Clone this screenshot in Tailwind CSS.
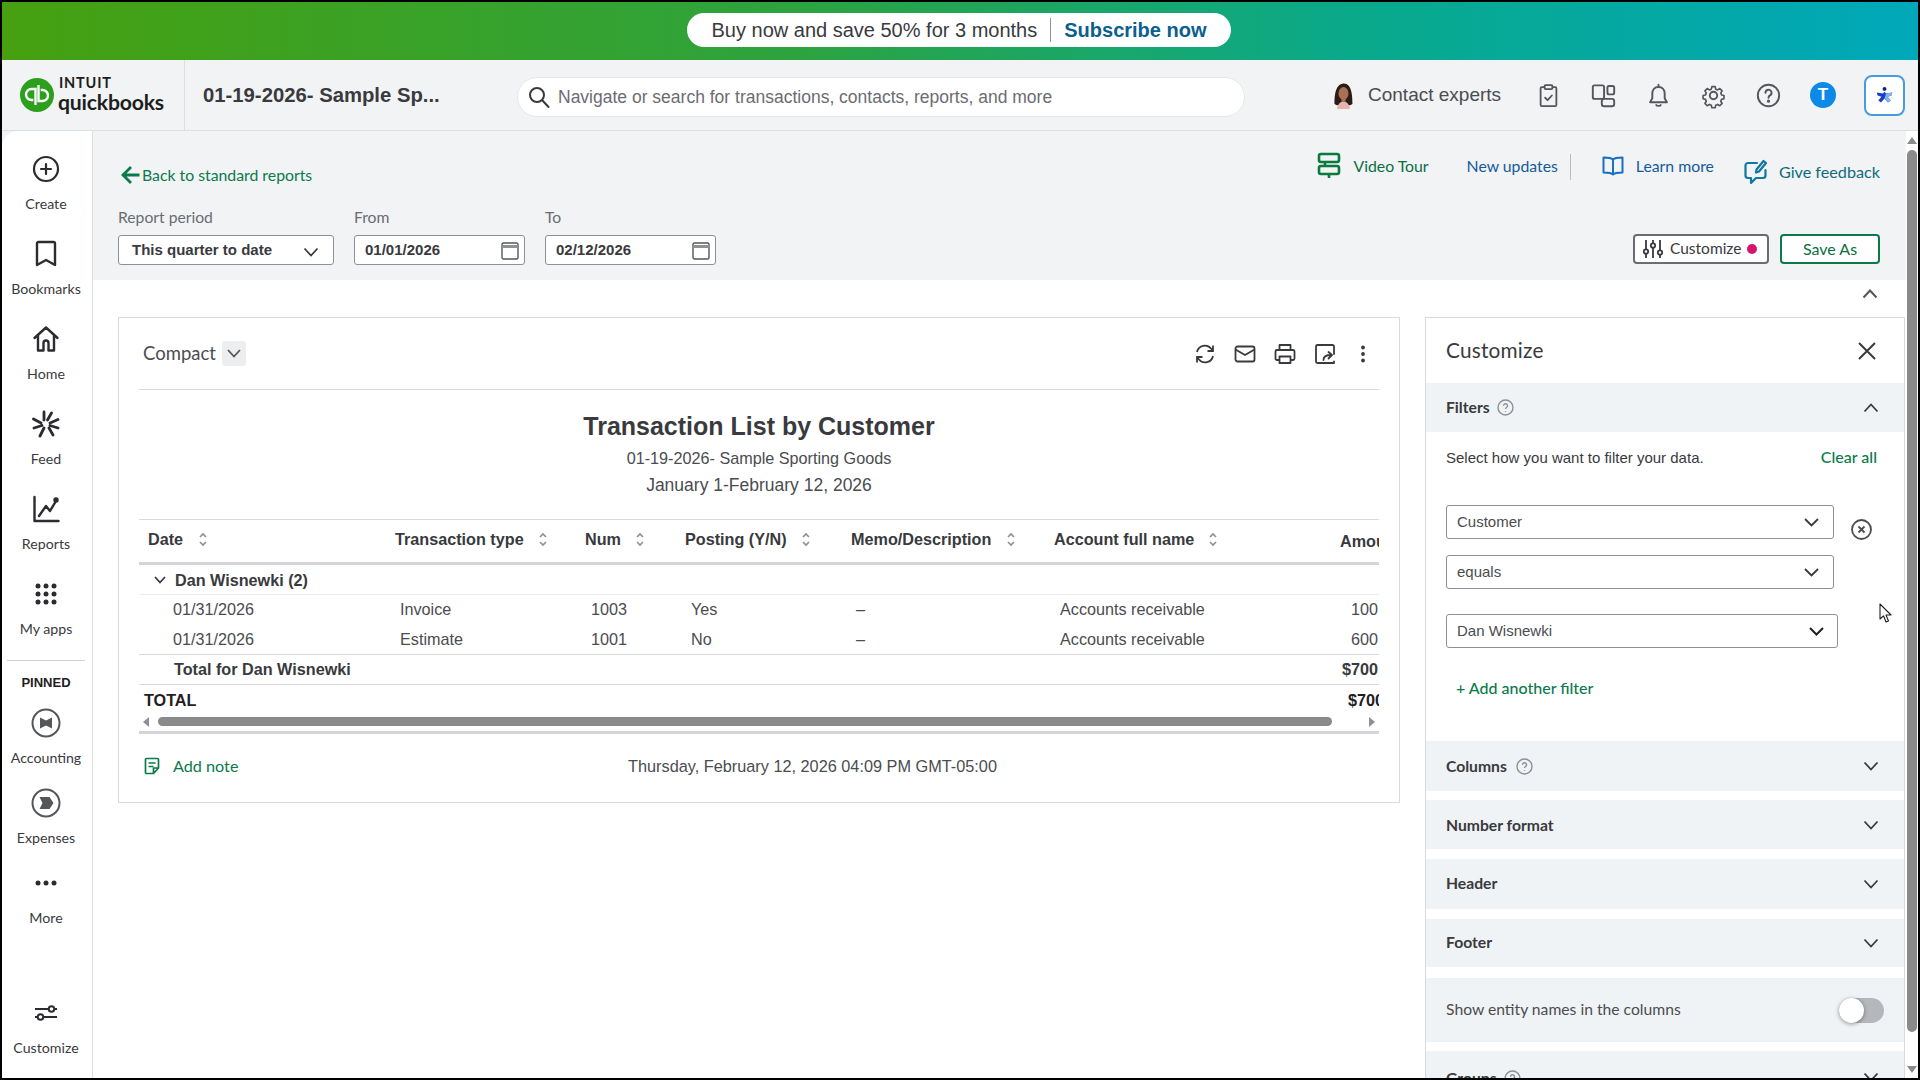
<!DOCTYPE html>
<html lang="en">
<head>
<meta charset="utf-8">
<title>Transaction List by Customer</title>
<script src="https://cdn.jsdelivr.net/npm/@tailwindcss/browser@4"></script>
</head>
<body class="bg-black overflow-hidden">
<div class="w-[1920px] h-[1080px] bg-black pl-[2px] pr-[2px] pt-[2px] pb-[2px] overflow-hidden font-['Liberation_Sans',sans-serif]">
<div class="relative w-[1916px] h-[1076px] flex flex-col overflow-hidden bg-[#f1f3f5]">

  <!-- promo banner -->
  <div class="h-[58px] shrink-0 flex items-start justify-center pt-[11px] pr-[2px] bg-[linear-gradient(90deg,#46a010_0%,#2ea33c_40%,#0aa98a_70%,#00a8ba_100%)]">
    <div class="h-[34px] w-[544px] rounded-full bg-white flex items-center justify-center text-[20px] text-[#393a3d]">
      <span>Buy now and save 50% for 3 months</span>
      <span class="w-px h-[24px] bg-[#8d9096] mx-[13px]"></span>
      <span class="font-bold text-[#0b5f8f] text-[20px]">Subscribe now</span>
    </div>
  </div>

  <!-- header -->
  <div class="h-[71px] shrink-0 flex items-stretch border-b border-[#dcdfe2]">
    <div class="w-[183px] shrink-0 border-r border-[#dcdfe2] flex items-center pl-[18px] gap-[4px]">
      <svg width="34" height="34" viewBox="0 0 34 34"><circle cx="17" cy="17" r="17" fill="#2ca01c"/><path d="M15.500 27V11h-4a5.500 5.500 0 0 0 0 11h1.800M18.500 7v16h4a5.500 5.500 0 0 0 0-11h-1.800" fill="none" stroke="#fff" stroke-width="2.400"/></svg>
      <div class="flex flex-col text-[#1d1e20] font-['Lato',sans-serif]">
        <span class="text-[14.500px] font-bold tracking-[0.8px] h-[14px] leading-[14px] ml-[1px]">INTUIT</span>
        <span class="text-[21.200px] font-bold h-[24px] leading-[24px] tracking-[-0.2px]">quickbooks</span>
      </div>
    </div>
    <div class="w-[332px] shrink-0 flex items-center pl-[18px] font-bold text-[20.300px] text-[#393a3d]">01-19-2026- Sample Sp...</div>
    <div class="w-[728px] h-[40px] mt-[17px] rounded-full bg-white border border-[#e5e7ea] flex items-center pl-[9px] gap-[7px] text-[17.500px] text-[#6b6c72]">
      <svg width="24" height="24" viewBox="0 0 24 24" fill="none" stroke="#393a3d" stroke-width="2" stroke-linecap="round"><circle cx="10" cy="10" r="7"/><path d="M15.500 15.500l6 6.500"/></svg>
      <span>Navigate or search for transactions, contacts, reports, and more</span>
    </div>
    <div class="flex items-center ml-[85px]">
      <svg width="27" height="29" viewBox="0 0 27 29" class="shrink-0"><circle cx="13.500" cy="14.500" r="13.500" fill="#f6f4f3"/><path d="M4.500 23c0-9 1-20 9-20.500S22.500 14 22.500 23c-2 1.500-4 1.500-5 1H9.500c-1 .5-3 .5-5-1z" fill="#2a1c19"/><ellipse cx="13.500" cy="12.500" rx="5" ry="6.500" fill="#a87152"/><path d="M11.500 17h4v4h-4z" fill="#a87152"/><path d="M7 28c.5-4 3-7 4.500-7h4c1.500 0 4 3 4.500 7z" fill="#e8b4ac"/></svg>
      <span class="ml-[11px] text-[19px] text-[#4b4c50] w-[167px]">Contact experts</span>
      <div class="flex items-center gap-[28px]">
        <svg width="27" height="27" viewBox="0 0 24 24" fill="none" stroke="#55565a" stroke-width="1.600" stroke-linejoin="round" stroke-linecap="round"><path d="M8.500 4.500H6a1 1 0 0 0-1 1v15a1 1 0 0 0 1 1h12a1 1 0 0 0 1-1v-15a1 1 0 0 0-1-1h-2.500"/><rect x="8.500" y="2.800" width="7" height="3.500" rx="1"/><path d="M9 14l2.200 2.200L15 12"/></svg>
        <svg width="27" height="27" viewBox="0 0 24 24" fill="none" stroke="#55565a" stroke-width="1.700" stroke-linejoin="round"><rect x="2.500" y="3" width="10" height="12" rx="1.500"/><rect x="15.500" y="3.500" width="6" height="7.500" rx="1.500"/><rect x="10.500" y="15" width="11" height="6.500" rx="2"/></svg>
        <svg width="27" height="27" viewBox="0 0 24 24" fill="none" stroke="#55565a" stroke-width="1.700" stroke-linejoin="round" stroke-linecap="round"><path d="M12 4.500c-3.500 0-5.500 2.500-5.500 6v4l-2 3.500h15l-2-3.500v-4c0-3.500-2-6-5.500-6zM12 2.500v2M10 20.500c.5 1 3.500 1 4 0"/></svg>
        <svg width="27" height="27" viewBox="0 0 24 24" fill="none" stroke="#55565a" stroke-width="1.700" stroke-linejoin="round"><path d="M10.300 2.800h3.400l.6 2.600 1.900.8 2.300-1.400 2.400 2.400-1.400 2.300.8 1.900 2.500.6v3.400l-2.500.6-.8 1.900 1.400 2.300-2.400 2.400-2.300-1.400-1.900.8-.6 2.600h-3.400l-.6-2.600-1.900-.8-2.300 1.400-2.400-2.400 1.400-2.300-.8-1.900-2.500-.6v-3.400l2.500-.6.8-1.900-1.400-2.300 2.400-2.400 2.300 1.400 1.900-.8z" transform="translate(1.700 1.700) scale(.86)"/><circle cx="12" cy="12" r="3.300"/></svg>
        <svg width="27" height="27" viewBox="0 0 24 24" fill="none" stroke="#55565a" stroke-width="1.700" stroke-linecap="round"><circle cx="12" cy="12" r="9.500"/><path d="M9.300 9.500a2.700 2.700 0 1 1 4 2.400c-.9.500-1.300 1-1.300 2.100"/><circle cx="12" cy="17" r=".6" fill="#55565a"/></svg>
      </div>
      <div class="ml-[28px] w-[26px] h-[26px] rounded-full bg-[#0d8ae8] text-white font-bold text-[17px] flex items-center justify-center">T</div>
      <div class="ml-[28px] w-[41px] h-[41px] rounded-[8px] bg-white border-[2px] border-[#4a9ade] flex items-center justify-center">
        <svg width="17" height="21" viewBox="0 0 22 24"><circle cx="11" cy="3.500" r="2.500" fill="#0b1f8a"/><path d="M1 8l8 1.500L11 7l2 2.500 8-1.500-1 4-5 1.500 4 5-3.500 2.500-4.500-5-4.500 5L3 18.500l4-5L2 12z" fill="#1a3fc8"/><path d="M13 9.500l8-1.500-1 4-5 1.500 4 5-3.500 2.500-4.500-5z" fill="#7fb2ee"/></svg>
      </div>
    </div>
  </div>

  <!-- body -->
  <div class="flex-1 flex min-h-0">
    <!-- sidebar -->
    <nav class="w-[91px] shrink-0 bg-white rounded-tl-[16px] border-r border-[#dcdfe2] flex flex-col items-center pt-[20px] pr-[2px] text-[14.200px] text-[#393a3d] font-['Lato',sans-serif]">
      <a class="h-[85px] w-full flex flex-col items-center">
        <span class="h-[36px] flex items-center"><svg width="28" height="28" viewBox="0 0 28 28" fill="none" stroke="#2b2c2f" stroke-width="2.200" stroke-linecap="round"><circle cx="14" cy="14" r="12"/><path d="M14 9v10M9 14h10"/></svg></span>
        <span class="mt-[7px] leading-[20px]">Create</span>
      </a>
      <a class="h-[85px] w-full flex flex-col items-center">
        <span class="h-[36px] flex items-center"><svg width="24" height="28" viewBox="0 0 24 28" fill="none" stroke="#2b2c2f" stroke-width="2.400" stroke-linejoin="round"><path d="M3 3.500a1.500 1.500 0 0 1 1.500-1.500h15A1.500 1.500 0 0 1 21 3.500V25l-9-5-9 5z"/></svg></span>
        <span class="mt-[7px] leading-[20px]">Bookmarks</span>
      </a>
      <a class="h-[85px] w-full flex flex-col items-center">
        <span class="h-[36px] flex items-center"><svg width="28" height="28" viewBox="0 0 28 28" fill="none" stroke="#2b2c2f" stroke-width="2.400" stroke-linejoin="round" stroke-linecap="round"><path d="M2.500 13L14 2.500 25.500 13M6 10v15.500h5.500V18a2.500 2.500 0 0 1 5 0v7.500H22V10"/></svg></span>
        <span class="mt-[7px] leading-[20px]">Home</span>
      </a>
      <a class="h-[85px] w-full flex flex-col items-center">
        <span class="h-[36px] flex items-center"><svg width="28" height="28" viewBox="0 0 28 28" fill="none" stroke="#2b2c2f" stroke-width="2.800" stroke-linecap="round"><path d="M12 2v8M19.500 3l-4 7M26 9.500l-8 3.500M1.500 9l7.500 4M2 18l8-2.500M8 26l4-8M17 18l4 7M18 15.500l8 2.500"/></svg></span>
        <span class="mt-[7px] leading-[20px]">Feed</span>
      </a>
      <a class="h-[85px] w-full flex flex-col items-center">
        <span class="h-[36px] flex items-center"><svg width="28" height="28" viewBox="0 0 28 28" fill="none" stroke="#2b2c2f" stroke-width="2.400" stroke-linejoin="round" stroke-linecap="round"><path d="M2.500 2v24h24"/><path d="M7 21l7-10 4 5 6-10"/><circle cx="24" cy="5" r="1.500" fill="#2b2c2f"/></svg></span>
        <span class="mt-[7px] leading-[20px]">Reports</span>
      </a>
      <a class="h-[85px] w-full flex flex-col items-center">
        <span class="h-[36px] flex items-center"><svg width="22" height="22" viewBox="0 0 22 22" fill="#2b2c2f"><circle cx="3" cy="3" r="2.500"/><circle cx="11" cy="3" r="2.500"/><circle cx="19" cy="3" r="2.500"/><circle cx="3" cy="11" r="2.500"/><circle cx="11" cy="11" r="2.500"/><circle cx="19" cy="11" r="2.500"/><circle cx="3" cy="19" r="2.500"/><circle cx="11" cy="19" r="2.500"/><circle cx="19" cy="19" r="2.500"/></svg></span>
        <span class="mt-[7px] leading-[20px]">My apps</span>
      </a>
      <div class="w-[78px] h-px bg-[#cfd1d4] mt-[-1px]"></div>
      <div class="mt-[12px] font-['Liberation_Sans',sans-serif] font-bold text-[13px] leading-[20px] text-[#1f2022]">PINNED</div>
      <a class="h-[80px] w-full flex flex-col items-center mt-[12px]">
        <span class="h-[36px] flex items-center"><svg width="30" height="30" viewBox="0 0 30 30"><circle cx="15" cy="15" r="13.500" fill="none" stroke="#55565a" stroke-width="2"/><path d="M9 9.500l6 3 6-3v11l-6-3-6 3z" fill="#55565a"/></svg></span>
        <span class="mt-[7px] leading-[20px]">Accounting</span>
      </a>
      <a class="h-[80px] w-full flex flex-col items-center">
        <span class="h-[36px] flex items-center"><svg width="30" height="30" viewBox="0 0 30 30"><circle cx="15" cy="15" r="13.500" fill="none" stroke="#55565a" stroke-width="2"/><path d="M8.500 9h10l4 6-4 6h-10l3-6z" fill="#55565a"/></svg></span>
        <span class="mt-[7px] leading-[20px]">Expenses</span>
      </a>
      <a class="h-[95px] w-full flex flex-col items-center">
        <span class="h-[36px] flex items-center"><svg width="22" height="6" viewBox="0 0 22 6" fill="#2b2c2f"><circle cx="3" cy="3" r="2.500"/><circle cx="11" cy="3" r="2.500"/><circle cx="19" cy="3" r="2.500"/></svg></span>
        <span class="mt-[7px] leading-[20px]">More</span>
      </a>
      <a class="h-[65px] w-full flex flex-col items-center mt-[35px]">
        <span class="h-[36px] flex items-center"><svg width="24" height="20" viewBox="0 0 24 20" fill="none" stroke="#2b2c2f" stroke-width="2"><path d="M1 6h14M20 6h3M1 14h3M9 14h14"/><circle cx="17.500" cy="6" r="2.800"/><circle cx="6.500" cy="14" r="2.800"/></svg></span>
        <span class="mt-[7px] leading-[20px]">Customize</span>
      </a>
    </nav>

    <!-- content -->
    <main class="flex-1 min-w-0 flex flex-col bg-white">
      <!-- toolbar -->
      <div class="h-[149px] shrink-0 bg-[#f1f3f5] pl-[25px] pr-[26px] flex flex-col">
        <div class="h-[76px] shrink-0 flex justify-between items-start">
          <a class="flex items-center mt-[32px] ml-[2px] text-[#0b7a4b] text-[15.800px] font-['Lato',sans-serif] leading-[24px]">
            <svg width="19" height="20" viewBox="0 0 19 20" fill="none" stroke="#0b7a4b" stroke-width="2.800" class="ml-[1px]"><path d="M18.500 10H3M10 2l-8 8 8 8"/></svg>
            <span class="ml-[2px]">Back to standard reports</span>
          </a>
          <div class="flex items-start font-['Lato',sans-serif] text-[15.800px] leading-[24px]">
            <a class="flex items-center mt-[21px] text-[#0b6e42]">
              <svg width="24" height="28" viewBox="0 0 24 28" fill="none" stroke="#0b7a3e" stroke-width="2.600" stroke-linejoin="round"><rect x="2" y="2" width="20" height="8" rx="2"/><rect x="2" y="14" width="20" height="8" rx="2"/><path d="M8 10v4M12 22v4"/></svg>
              <span class="ml-[12px]">Video Tour</span>
            </a>
            <a class="ml-[38px] mt-[23px] text-[#155a9c]">New updates</a>
            <span class="ml-[12px] mt-[23px] w-px h-[26px] bg-[#b9bcc0]"></span>
            <a class="flex items-center ml-[31px] mt-[23px] text-[#155a9c]">
              <svg width="22" height="22" viewBox="0 0 22 22" fill="none" stroke="#1b6fc0" stroke-width="2" stroke-linejoin="round"><path d="M11 4.500C9 2.500 5 2.500 1.500 2.500v15c3.500 0 7.500 0 9.500 2 2-2 6-2 9.500-2v-15c-3.500 0-7.500 0-9.500 2zM11 4.500v15"/></svg>
              <span class="ml-[12px]">Learn more</span>
            </a>
            <a class="flex items-center ml-[30px] mt-[28px] text-[#0f6b7c] text-[16.200px]">
              <svg width="24" height="26" viewBox="0 0 24 26" fill="none" stroke="#0f78a0" stroke-width="2.200" stroke-linejoin="round" stroke-linecap="round"><path d="M13 4H4a2.500 2.500 0 0 0-2.500 2.500v10A2.500 2.500 0 0 0 4 19h3v5l5-5h7a2.500 2.500 0 0 0 2.500-2.500V11"/><path d="M19.500 2l2.500 2-7 8.500-3 1 .5-3z"/></svg>
              <span class="ml-[11px]">Give feedback</span>
            </a>
          </div>
        </div>
        <div class="flex justify-between items-end">
          <div class="flex items-end gap-[20px] font-['Lato',sans-serif]">
            <label class="flex flex-col">
              <span class="text-[15.700px] leading-[20px] text-[#6b6c72] mb-[8px]">Report period</span>
              <span class="h-[30px] w-[216px] bg-white border border-[#8d9096] rounded-[3px] flex items-center justify-between pl-[13px] pr-[14px] text-[15px] font-bold text-[#393a3d] font-['Liberation_Sans',sans-serif]">This quarter to date
                <svg width="16" height="10" viewBox="0 0 16 10" fill="none" stroke="#393a3d" stroke-width="1.800" class="mt-[3px]"><path d="M1.500 1.500L8 8.500l6.500-7"/></svg>
              </span>
            </label>
            <label class="flex flex-col">
              <span class="text-[15.700px] leading-[20px] text-[#6b6c72] mb-[8px]">From</span>
              <span class="h-[30px] w-[171px] bg-white border border-[#8d9096] rounded-[3px] flex items-center justify-between pl-[10px] pr-[5px] text-[15px] font-bold text-[#393a3d] font-['Liberation_Sans',sans-serif]">01/01/2026
                <svg width="18" height="19" viewBox="0 0 18 19" fill="none" stroke="#55565a" stroke-width="1.400"><rect x="1" y="2" width="16" height="16" rx="1.500"/><path d="M1 5.500h16" stroke-width="3" stroke="#8d9096"/></svg>
              </span>
            </label>
            <label class="flex flex-col">
              <span class="text-[15.700px] leading-[20px] text-[#6b6c72] mb-[8px]">To</span>
              <span class="h-[30px] w-[171px] bg-white border border-[#8d9096] rounded-[3px] flex items-center justify-between pl-[10px] pr-[5px] text-[15px] font-bold text-[#393a3d] font-['Liberation_Sans',sans-serif]">02/12/2026
                <svg width="18" height="19" viewBox="0 0 18 19" fill="none" stroke="#55565a" stroke-width="1.400"><rect x="1" y="2" width="16" height="16" rx="1.500"/><path d="M1 5.500h16" stroke-width="3" stroke="#8d9096"/></svg>
              </span>
            </label>
          </div>
          <div class="flex items-center gap-[11px] mb-[1px] font-['Lato',sans-serif] text-[15.500px]">
            <a class="w-[136px] h-[30px] bg-white border-[2px] border-[#6b6c72] rounded-[4px] flex items-center pl-[7px] text-[#393a3d]">
              <svg width="22" height="20" viewBox="0 0 22 20" fill="none" stroke="#393a3d" stroke-width="1.800"><path d="M4 1v9M4 15v4M11 1v3M11 9v10M18 1v10M18 16v3"/><circle cx="4" cy="12.500" r="2.200"/><circle cx="11" cy="6.500" r="2.200"/><circle cx="18" cy="13.500" r="2.200"/></svg>
              <span class="ml-[6px]">Customize</span>
              <span class="ml-[6px] w-[10px] h-[10px] rounded-full bg-[#d6146e]"></span>
            </a>
            <a class="w-[100px] h-[30px] bg-white border-[2px] border-[#0b7a4b] rounded-[4px] flex items-center justify-center text-[#0b6e42] text-[16px]">Save As</a>
          </div>
        </div>
      </div>

      <!-- collapse chevron -->
      <div class="h-[37px] shrink-0 flex justify-end pr-[28px] pb-[10px] items-center">
        <svg width="16" height="10" viewBox="0 0 16 10" fill="none" stroke="#55565a" stroke-width="2"><path d="M1.500 8.500L8 1.500l6.500 7"/></svg>
      </div>

      <div class="flex-1 min-h-0 flex items-start pl-[25px] gap-[25px]">
        <!-- report card -->
        <section class="w-[1282px] h-[486px] border border-[#d9dadc] shrink-0 px-[20px] flex flex-col text-[#393a3d]">
          <div class="h-[72px] shrink-0 flex items-center justify-between border-b border-[#d9dadc] pl-[4px] pr-[5px]">
            <div class="flex items-center font-['Lato',sans-serif] text-[18.500px] text-[#4b4c50]">
              Compact
              <span class="ml-[6px] w-[24px] h-[25px] rounded-[3px] bg-[#eceef0] flex items-center justify-center"><svg width="14" height="9" viewBox="0 0 14 9" fill="none" stroke="#55565a" stroke-width="1.800"><path d="M1 1l6 6.500L13 1"/></svg></span>
            </div>
            <div class="flex items-center gap-[18px]">
              <svg width="22" height="22" viewBox="0 0 22 22" fill="none" stroke="#393a3d" stroke-width="1.800"><path d="M3 9a8 8 0 0 1 14-3.500l2 2.500M19 2.500V8h-5.500M19 13a8 8 0 0 1-14 3.500L3 14M3 19.500V14h5.500"/></svg>
              <svg width="22" height="22" viewBox="0 0 22 22" fill="none" stroke="#393a3d" stroke-width="1.800" stroke-linejoin="round"><rect x="1.500" y="3.500" width="19" height="15" rx="2"/><path d="M1.500 6.500L11 12l9.500-5.500"/></svg>
              <svg width="22" height="22" viewBox="0 0 22 22" fill="none" stroke="#393a3d" stroke-width="1.800" stroke-linejoin="round"><path d="M5.500 7V2h11v5M5 17H3a1.500 1.500 0 0 1-1.500-1.500v-7A1.500 1.500 0 0 1 3 7h16a1.500 1.500 0 0 1 1.500 1.500v7A1.500 1.500 0 0 1 19 17h-2"/><path d="M5.500 13.500h11V20h-11z"/></svg>
              <svg width="22" height="22" viewBox="0 0 22 22" fill="none" stroke="#393a3d" stroke-width="1.800" stroke-linejoin="round" stroke-linecap="round"><path d="M20 11V3.500A1.500 1.500 0 0 0 18.500 2h-15A1.500 1.500 0 0 0 2 3.500v15A1.500 1.500 0 0 0 3.500 20H20v-1.500"/><path d="M9.500 17c0-3.500 3-5 7.500-5M14.500 9l3.500 3-3.500 3.500"/></svg>
              <svg width="22" height="22" viewBox="0 0 22 22" fill="#393a3d" class="ml-[-2px]"><circle cx="11" cy="4.500" r="1.900"/><circle cx="11" cy="11" r="1.900"/><circle cx="11" cy="17.500" r="1.900"/></svg>
            </div>
          </div>
          <div class="h-[129px] shrink-0 flex flex-col items-center text-center">
            <h1 class="mt-[20px] leading-[32px] font-bold text-[25px] text-[#393a3d]">Transaction List by Customer</h1>
            <p class="leading-[24px] mt-[4px] text-[16.200px] text-[#4b4c50]">01-19-2026- Sample Sporting Goods</p>
            <p class="leading-[24px] mt-[3px] text-[17.500px] text-[#4b4c50]">January 1-February 12, 2026</p>
          </div>
          <!-- table -->
          <div class="overflow-hidden flex flex-col">
            <div class="grid grid-cols-[252px_190px_100px_166px_203px_281px_100px] h-[46px] items-center border-t border-[#d9dadc] border-b-[3px] border-b-[#d4d5d8] font-bold text-[16.200px] text-[#393a3d] shrink-0 pb-[3px]">
              <span class="pl-[9px] flex items-center gap-[15px]">Date <svg width="10" height="15" viewBox="0 0 10 15" fill="none" stroke="#8d9096" stroke-width="1.700"><path d="M2 5l3-3 3 3M2 10l3 3 3-3"/></svg></span>
              <span class="pl-[4px] flex items-center gap-[14px]">Transaction type <svg width="10" height="15" viewBox="0 0 10 15" fill="none" stroke="#8d9096" stroke-width="1.700"><path d="M2 5l3-3 3 3M2 10l3 3 3-3"/></svg></span>
              <span class="pl-[4px] flex items-center gap-[14px]">Num <svg width="10" height="15" viewBox="0 0 10 15" fill="none" stroke="#8d9096" stroke-width="1.700"><path d="M2 5l3-3 3 3M2 10l3 3 3-3"/></svg></span>
              <span class="pl-[4px] flex items-center gap-[14px]">Posting (Y/N) <svg width="10" height="15" viewBox="0 0 10 15" fill="none" stroke="#8d9096" stroke-width="1.700"><path d="M2 5l3-3 3 3M2 10l3 3 3-3"/></svg></span>
              <span class="pl-[4px] flex items-center gap-[15px]">Memo/Description <svg width="10" height="15" viewBox="0 0 10 15" fill="none" stroke="#8d9096" stroke-width="1.700"><path d="M2 5l3-3 3 3M2 10l3 3 3-3"/></svg></span>
              <span class="pl-[4px] flex items-center gap-[14px]">Account full name <svg width="10" height="15" viewBox="0 0 10 15" fill="none" stroke="#8d9096" stroke-width="1.700"><path d="M2 5l3-3 3 3M2 10l3 3 3-3"/></svg></span>
              <span class="pl-[9px] pt-[4px]">Amount</span>
            </div>
            <div class="h-[30px] flex items-center border-b border-[#ecedef] font-bold text-[16.200px] pl-[15px] gap-[9px] shrink-0 pt-[1px]">
              <svg width="12" height="8" viewBox="0 0 12 8" fill="none" stroke="#393a3d" stroke-width="1.800"><path d="M1 1l5 5.500L11 1"/></svg>
              <span>Dan Wisnewki (2)</span>
            </div>
            <div class="grid grid-cols-[252px_190px_100px_166px_203px_281px_100px] h-[30px] items-center text-[16.200px] text-[#4b4c50] shrink-0 pb-[1px]">
              <span class="pl-[34px]">01/31/2026</span><span class="pl-[9px]">Invoice</span><span class="pl-[10px]">1003</span><span class="pl-[10px]">Yes</span><span class="pl-[9px]">–</span><span class="pl-[10px]">Accounts receivable</span><span class="text-right pr-[53px]">100</span>
            </div>
            <div class="grid grid-cols-[252px_190px_100px_166px_203px_281px_100px] h-[30px] items-center text-[16.200px] text-[#4b4c50] border-b border-[#d9dadc] shrink-0">
              <span class="pl-[34px]">01/31/2026</span><span class="pl-[9px]">Estimate</span><span class="pl-[10px]">1001</span><span class="pl-[10px]">No</span><span class="pl-[9px]">–</span><span class="pl-[10px]">Accounts receivable</span><span class="text-right pr-[53px]">600</span>
            </div>
            <div class="h-[30px] flex items-center justify-between border-b border-[#d9dadc] font-bold text-[16.200px] pl-[35px] pr-[1px] shrink-0">
              <span>Total for Dan Wisnewki</span><span>$700</span>
            </div>
            <div class="h-[30px] flex items-center justify-between font-bold text-[16.200px] text-[#1f2022] pl-[5px] shrink-0">
              <span>TOTAL</span><span class="mr-[-5px]">$700</span>
            </div>
          </div>
          <!-- table scrollbar -->
          <div class="h-[19px] flex items-center border-b-[3px] border-[#d4d5d8] shrink-0 pb-[3px]">
            <span class="ml-[4px] w-0 h-0 border-y-[5px] border-y-transparent border-r-[6px] border-r-[#8d9096]"></span>
            <span class="ml-[9px] w-[1174px] h-[9px] rounded-full bg-[#8a8a8a]"></span>
            <span class="ml-[37px] w-0 h-0 border-y-[5px] border-y-transparent border-l-[6px] border-l-[#8d9096]"></span>
          </div>
          <div class="flex-1 relative flex items-center justify-center pb-[4px]">
            <a class="absolute left-[5px] top-1/2 -translate-y-[14px] flex items-center text-[#0b7a4b] font-['Lato',sans-serif] text-[16.200px]">
              <svg width="16" height="18" viewBox="0 0 16 18" fill="none" stroke="#0b7a4b" stroke-width="1.700" stroke-linejoin="round"><path d="M9.500 16.500H2.500a1 1 0 0 1-1-1v-13a1 1 0 0 1 1-1h11a1 1 0 0 1 1 1V11zM14.500 11H9.500v5.500M4.500 6h7M4.500 9.500h5"/></svg>
              <span class="ml-[13px]">Add note</span>
            </a>
            <span class="text-[16.300px] text-[#4b4c50] ml-[107px]">Thursday, February 12, 2026 04:09 PM GMT-05:00</span>
          </div>
        </section>

        <!-- customize panel -->
        <aside class="relative w-[480px] h-[800px] border border-[#d9dadc] border-b-0 shrink-0 flex flex-col text-[#393a3d]">
          <div class="h-[65px] shrink-0 flex items-center justify-between pl-[20px] pr-[27px] font-['Lato',sans-serif] text-[20.800px] text-[#393a3d]">
            <span class="mb-[2px] tracking-[0.2px]">Customize</span>
            <svg width="20" height="20" viewBox="0 0 20 20" fill="none" stroke="#393a3d" stroke-width="2"><path d="M2 2l16 16M18 2L2 18"/></svg>
          </div>
          <div class="h-[49px] shrink-0 bg-[#f0f3f5] flex items-center justify-between pl-[20px] pr-[25px] font-['Lato',sans-serif] font-bold text-[15.700px]">
            <span class="flex items-center gap-[7px]">Filters <svg width="17" height="17" viewBox="0 0 17 17" fill="none" stroke="#8d9096" stroke-width="1.400"><circle cx="8.500" cy="8.500" r="7.500"/><path d="M6.500 6.800a2 2 0 1 1 3 1.700c-.7.400-1 .8-1 1.500M8.500 12.300v.6"/></svg></span>
            <svg width="16" height="10" viewBox="0 0 16 10" fill="none" stroke="#393a3d" stroke-width="1.800"><path d="M1.500 8.500L8 1.500l6.500 7"/></svg>
          </div>
          <div class="h-[309px] shrink-0 pl-[20px] pr-[26px] flex flex-col">
            <div class="flex justify-between h-[52px] items-center shrink-0">
              <span class="text-[15px] text-[#393a3d] leading-[20px]">Select how you want to filter your data.</span>
              <a class="font-['Lato',sans-serif] text-[16px] text-[#0b7a4b] font-medium mb-[2px] mr-[1px]">Clear all</a>
            </div>
            <div class="relative mt-[21px] w-[388px] h-[34px] border border-[#8d9096] rounded-[3px] flex items-center justify-between pl-[10px] pr-[14px] text-[15px] text-[#4b4c50]"><span class="mt-[1px]">Customer</span>
              <svg width="15" height="9" viewBox="0 0 15 9" fill="none" stroke="#393a3d" stroke-width="1.800"><path d="M1 1l6.500 6.500L14 1"/></svg>
              <svg width="21" height="21" viewBox="0 0 21 21" fill="none" stroke="#4b4c50" stroke-width="1.800" class="absolute left-[404px] top-[13px]"><circle cx="10.500" cy="10.500" r="9.500"/><path d="M7.500 7.500l6 6M13.500 7.500l-6 6"/></svg>
            </div>
            <div class="mt-[16px] w-[388px] h-[34px] border border-[#8d9096] rounded-[3px] flex items-center justify-between pl-[10px] pr-[14px] text-[15px] text-[#4b4c50]">equals
              <svg width="15" height="9" viewBox="0 0 15 9" fill="none" stroke="#393a3d" stroke-width="1.800"><path d="M1 1l6.500 6.500L14 1"/></svg>
            </div>
            <div class="mt-[25px] w-[392px] h-[34px] border border-[#8d9096] rounded-[3px] flex items-center justify-between pl-[10px] pr-[13px] text-[15px] text-[#4b4c50]"><span class="mt-[1px]">Dan Wisnewki</span>
              <svg width="15" height="9" viewBox="0 0 15 9" fill="none" stroke="#1f2022" stroke-width="2"><path d="M1 1l6.500 6.500L14 1"/></svg>
            </div>
            <a class="mt-[30px] ml-[10px] font-['Lato',sans-serif] font-medium text-[16px] text-[#0b7a4b] leading-[20px]">+ Add another filter</a>
          </div>
          <div class="h-[50px] shrink-0 bg-[#f0f3f5] flex items-center justify-between pl-[20px] pr-[25px] font-['Lato',sans-serif] font-bold text-[15.700px]">
            <span class="flex items-center gap-[9px] mt-[1px]">Columns <svg width="17" height="17" viewBox="0 0 17 17" fill="none" stroke="#8d9096" stroke-width="1.400"><circle cx="8.500" cy="8.500" r="7.500"/><path d="M6.500 6.800a2 2 0 1 1 3 1.700c-.7.400-1 .8-1 1.500M8.500 12.300v.6"/></svg></span>
            <svg width="16" height="10" viewBox="0 0 16 10" fill="none" stroke="#393a3d" stroke-width="1.800"><path d="M1.500 1.500L8 8.500l6.500-7"/></svg>
          </div>
          <div class="mt-[9px] h-[49px] shrink-0 bg-[#f0f3f5] flex items-center justify-between pl-[20px] pr-[25px] font-['Lato',sans-serif] font-bold text-[15.700px]">
            <span class="mt-[2px]">Number format</span>
            <svg width="16" height="10" viewBox="0 0 16 10" fill="none" stroke="#393a3d" stroke-width="1.800"><path d="M1.500 1.500L8 8.500l6.500-7"/></svg>
          </div>
          <div class="mt-[10px] h-[50px] shrink-0 bg-[#f0f3f5] flex items-center justify-between pl-[20px] pr-[25px] font-['Lato',sans-serif] font-bold text-[15.700px]">
            <span>Header</span>
            <svg width="16" height="10" viewBox="0 0 16 10" fill="none" stroke="#393a3d" stroke-width="1.800"><path d="M1.500 1.500L8 8.500l6.500-7"/></svg>
          </div>
          <div class="mt-[10px] h-[48px] shrink-0 bg-[#f0f3f5] flex items-center justify-between pl-[20px] pr-[25px] font-['Lato',sans-serif] font-bold text-[15.700px]">
            <span>Footer</span>
            <svg width="16" height="10" viewBox="0 0 16 10" fill="none" stroke="#393a3d" stroke-width="1.800"><path d="M1.500 1.500L8 8.500l6.500-7"/></svg>
          </div>
          <div class="mt-[11px] h-[64px] shrink-0 bg-[#f0f3f5] flex items-center justify-between pl-[20px] pr-[20px] font-['Lato',sans-serif] text-[15.700px] text-[#4b4c50]">
            <span>Show entity names in the columns</span>
            <span class="w-[45px] h-[25px] rounded-full bg-[#b5b7bd] flex items-center"><span class="w-[25px] h-[25px] rounded-full bg-white shadow-[0_1px_4px_rgba(0,0,0,0.4)]"></span></span>
          </div>
          <div class="mt-[9px] h-[60px] shrink-0 bg-[#f0f3f5] flex items-start justify-between pt-[16px] pl-[20px] pr-[25px] font-['Lato',sans-serif] font-bold text-[15.700px]">
            <span class="flex items-center gap-[7px]">Groups <svg width="17" height="17" viewBox="0 0 17 17" fill="none" stroke="#8d9096" stroke-width="1.400"><circle cx="8.500" cy="8.500" r="7.500"/><path d="M6.500 6.800a2 2 0 1 1 3 1.700c-.7.400-1 .8-1 1.500M8.500 12.300v.6"/></svg></span>
            <svg width="16" height="10" viewBox="0 0 16 10" fill="none" stroke="#393a3d" stroke-width="1.800" class="mt-[5px]"><path d="M1.500 1.500L8 8.500l6.500-7"/></svg>
          </div>
        </aside>
      </div>
    </main>

    <!-- page scrollbar -->
    <div class="w-[12px] shrink-0 bg-white flex flex-col items-center">
      <span class="mt-[6px] w-0 h-0 border-x-[5px] border-x-transparent border-b-[7px] border-b-[#8a8a8a]"></span>
      <span class="mt-[6px] w-[10px] h-[882px] rounded-full bg-[#8a8a8a]"></span>
      <span class="mt-[34px] w-0 h-0 border-x-[5px] border-x-transparent border-t-[7px] border-t-[#8a8a8a]"></span>
    </div>
  </div>

  <!-- mouse pointer -->
  <svg width="14" height="21" viewBox="0 0 14 21" class="absolute left-[1877px] top-[601px]"><path d="M1 1v15l3.500-3.200L7 19l2.500-1-2.500-6h5z" fill="#fff" stroke="#1f2022" stroke-width="1.100" stroke-linejoin="round"/></svg>
</div>
</div>
</body>
</html>
